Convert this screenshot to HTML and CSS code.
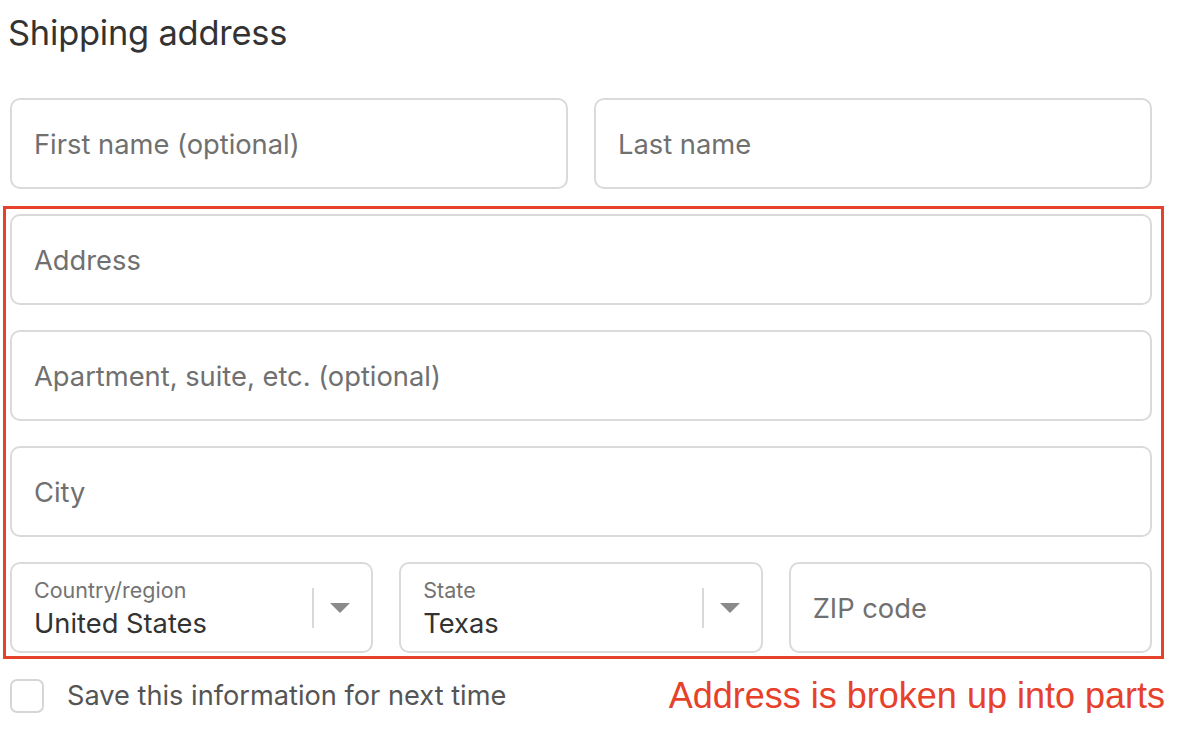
FILE: index.html
```html
<!DOCTYPE html>
<html lang="en">
<head>
<meta charset="utf-8">
<title>Shipping address</title>
<link rel="stylesheet" href="styles.css">
</head>
<body>
<div class="page">
  <h1 class="title">Shipping address</h1>
  <div class="row two">
    <div class="field"><span class="ph">First name (optional)</span></div>
    <div class="field"><span class="ph">Last name</span></div>
  </div>
  <div class="highlight">
    <div class="field"><span class="ph">Address</span></div>
    <div class="field"><span class="ph">Apartment, suite, etc. (optional)</span></div>
    <div class="field"><span class="ph">City</span></div>
    <div class="row three">
      <div class="field select">
        <div class="sel-text"><span class="label">Country/region</span><span class="value">United States</span></div>
        <span class="divider"></span>
        <span class="caret"></span>
      </div>
      <div class="field select">
        <div class="sel-text"><span class="label">State</span><span class="value">Texas</span></div>
        <span class="divider"></span>
        <span class="caret"></span>
      </div>
      <div class="field"><span class="ph">ZIP code</span></div>
    </div>
  </div>
  <div class="footer">
    <div class="check"><span class="box"></span><span class="check-text">Save this information for next time</span></div>
    <span class="note">Address is broken up into parts</span>
  </div>
</div>
</body>
</html>
```
FILE: styles.css
```css
html, body {
  margin: 0;
  background: #ffffff;
}
body {
  font-family: Inter, "Noto Sans", sans-serif;
  color: #333333;
}
.page {
  width: 1142px;
  margin-left: 10px;
}
.title {
  margin: 0 0 0 -2px;
  padding-top: 13px;
  font-size: 34.4px;
  line-height: 40px;
  font-weight: 400;
  color: #333333;
  letter-spacing: -0.2px;
}
.row {
  display: grid;
  gap: 25px;
}
.row.two {
  grid-template-columns: 1fr 1fr;
  column-gap: 26px;
  margin-top: 45px;
}
.row.three {
  grid-template-columns: 1fr 1fr 1fr;
  column-gap: 26px;
}
.field {
  box-sizing: border-box;
  height: 91px;
  border: 2px solid #dadada;
  border-radius: 10px;
  padding-left: 22px;
  display: flex;
  align-items: center;
  background: #fff;
}
.ph {
  font-size: 27.3px;
  color: #707070;
  padding-top: 1px;
}
.highlight {
  margin: 17px -12px 0 -7px;
  border: 3px solid #e5412b;
  padding: 5px 9px 3px 4px;
  display: flex;
  flex-direction: column;
  gap: 25px;
}
.select .sel-text {
  flex: 1;
  display: flex;
  flex-direction: column;
  padding-top: 2px;
}
.label {
  font-size: 21.5px;
  line-height: 30px;
  color: #737373;
}
.value {
  font-size: 27.3px;
  line-height: 38px;
  color: #333333;
}
.divider {
  width: 2px;
  height: 40px;
  background: #d9d9d9;
  margin-right: 16px;
}
.caret {
  width: 0;
  height: 0;
  border-left: 10px solid transparent;
  border-right: 10px solid transparent;
  border-top: 10px solid #8a8a8a;
  margin-right: 21px;
}
.footer {
  margin-top: 20px;
  margin-right: -13px;
  height: 34px;
  display: flex;
  align-items: center;
  justify-content: space-between;
}
.check {
  display: flex;
  align-items: center;
  gap: 23px;
}
.box {
  box-sizing: border-box;
  width: 34px;
  height: 34px;
  border: 2px solid #d6d6d6;
  border-radius: 7px;
}
.check-text {
  font-size: 27.2px;
  line-height: 34px;
  color: #555555;
}
.note {
  font-family: "Liberation Sans", Arial, sans-serif;
  font-size: 36px;
  line-height: 34px;
  color: #e5412b;
}
```
